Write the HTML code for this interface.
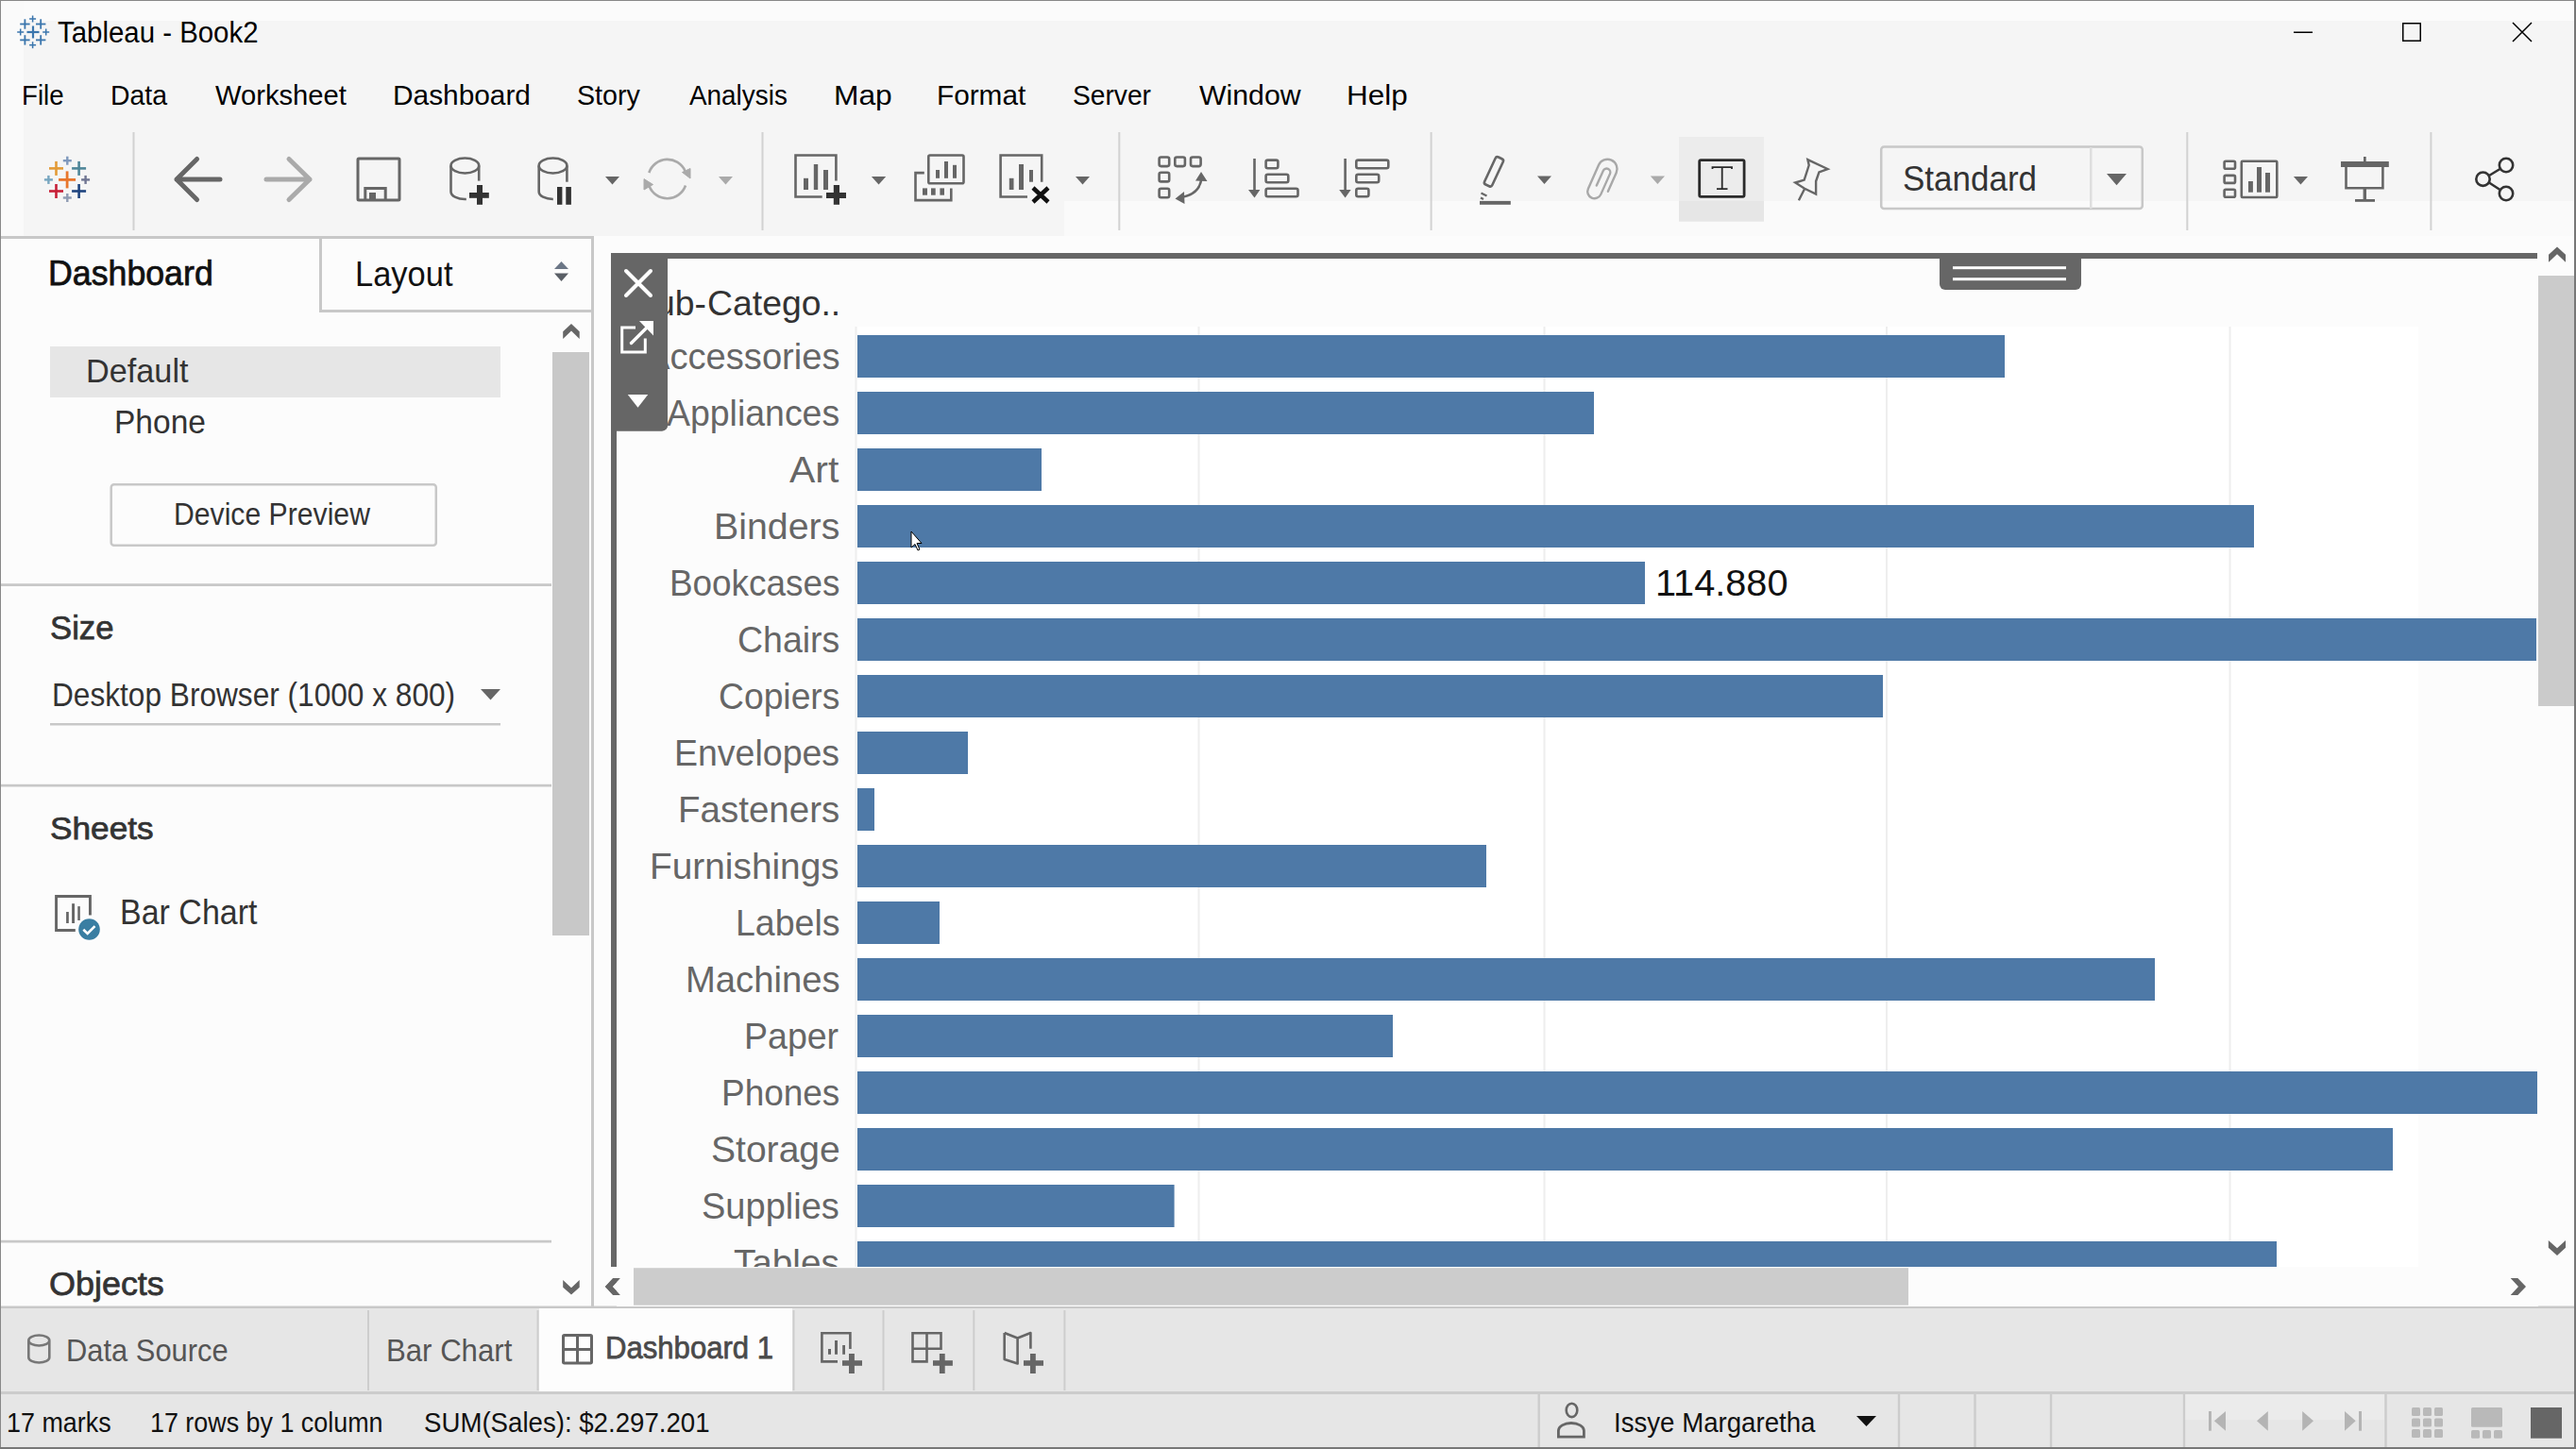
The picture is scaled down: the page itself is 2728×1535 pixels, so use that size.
<!DOCTYPE html>
<html><head><meta charset="utf-8"><style>
html,body{margin:0;padding:0;width:2728px;height:1535px;overflow:hidden;background:#f5f5f5}
.ov{position:absolute;left:0;top:0}
.tx{position:absolute;white-space:nowrap;font-family:"Liberation Sans",sans-serif;transform-origin:0 0}
</style></head><body>
<svg class="ov" width="2728" height="1535" viewBox="0 0 2728 1535"><rect x="0" y="0" width="2728" height="1535" fill="#f5f5f5" />
<rect x="1" y="1" width="2725" height="21" fill="#fbfbfb" />
<rect x="1" y="1" width="24" height="249" fill="#fafafa" />
<rect x="1127" y="213" width="1599" height="37" fill="#fafafa" />
<rect x="28.5" y="32.9" width="13.0" height="2.200000000000003" fill="#3b76ad" />
<rect x="33.9" y="27.5" width="2.200000000000003" height="13.0" fill="#3b76ad" />
<rect x="21.2" y="24.6" width="10.399999999999999" height="1.7999999999999972" fill="#3b76ad" />
<rect x="25.5" y="20.3" width="1.7999999999999972" height="10.399999999999999" fill="#3b76ad" />
<rect x="38.0" y="24.6" width="10.400000000000006" height="1.7999999999999972" fill="#3b76ad" />
<rect x="42.300000000000004" y="20.3" width="1.7999999999999972" height="10.399999999999999" fill="#3b76ad" />
<rect x="21.2" y="41.5" width="10.399999999999999" height="1.7999999999999972" fill="#3b76ad" />
<rect x="25.5" y="37.199999999999996" width="1.7999999999999972" height="10.400000000000006" fill="#3b76ad" />
<rect x="38.0" y="41.5" width="10.400000000000006" height="1.7999999999999972" fill="#3b76ad" />
<rect x="42.300000000000004" y="37.199999999999996" width="1.7999999999999972" height="10.400000000000006" fill="#3b76ad" />
<rect x="31.1" y="19.25" width="7.0" height="1.5" fill="#3b76ad" />
<rect x="33.85" y="16.5" width="1.5" height="7.0" fill="#3b76ad" />
<rect x="31.1" y="46.95" width="7.0" height="1.5" fill="#3b76ad" />
<rect x="33.85" y="44.2" width="1.5" height="7.0" fill="#3b76ad" />
<rect x="18.2" y="33.25" width="7.0" height="1.5" fill="#3b76ad" />
<rect x="20.95" y="30.5" width="1.5" height="7.0" fill="#3b76ad" />
<rect x="45.2" y="33.25" width="7.0" height="1.5" fill="#3b76ad" />
<rect x="47.95" y="30.5" width="1.5" height="7.0" fill="#3b76ad" />
<rect x="2429" y="33.5" width="20" height="1.5" fill="#000" />
<rect x="2544.75" y="24.75" width="18.5" height="18.5" fill="none" stroke="#000" stroke-width="1.5"/>
<path d="M2661 24 L2681 44 M2681 24 L2661 44" stroke="#000" stroke-width="1.5" fill="none" />
<rect x="62.099999999999994" y="189.0" width="18.0" height="2.8000000000000114" fill="#e8762c" />
<rect x="69.69999999999999" y="181.4" width="2.8000000000000114" height="18.0" fill="#e8762c" />
<rect x="52.0" y="177.1" width="15.0" height="2.6000000000000227" fill="#e39b37" />
<rect x="58.2" y="170.9" width="2.5999999999999943" height="15.0" fill="#e39b37" />
<rect x="76.1" y="177.1" width="15.0" height="2.6000000000000227" fill="#4f8799" />
<rect x="82.3" y="170.9" width="2.5999999999999943" height="15.0" fill="#4f8799" />
<rect x="52.0" y="201.2" width="15.0" height="2.6000000000000227" fill="#c72037" />
<rect x="58.2" y="195.0" width="2.5999999999999943" height="15.0" fill="#c72037" />
<rect x="76.1" y="201.2" width="15.0" height="2.6000000000000227" fill="#1f447f" />
<rect x="82.3" y="195.0" width="2.5999999999999943" height="15.0" fill="#1f447f" />
<rect x="66.8" y="169.0" width="9.0" height="2.3999999999999773" fill="#7f98bc" />
<rect x="70.1" y="165.7" width="2.4000000000000057" height="9.0" fill="#7f98bc" />
<rect x="66.8" y="208.3" width="9.0" height="2.3999999999999773" fill="#8e9bb3" />
<rect x="70.1" y="205.0" width="2.4000000000000057" height="9.0" fill="#8e9bb3" />
<rect x="46.9" y="189.20000000000002" width="9.0" height="2.3999999999999773" fill="#77a6c0" />
<rect x="50.199999999999996" y="185.9" width="2.4000000000000057" height="9.0" fill="#77a6c0" />
<rect x="86.1" y="189.20000000000002" width="9.0" height="2.3999999999999773" fill="#6f7592" />
<rect x="89.39999999999999" y="185.9" width="2.4000000000000057" height="9.0" fill="#6f7592" />
<rect x="140.5" y="140" width="2.0" height="104" fill="#d2d2d2" />
<rect x="806.5" y="140" width="2.0" height="104" fill="#d2d2d2" />
<rect x="1184.3" y="140" width="2.0" height="104" fill="#d2d2d2" />
<rect x="1514.6" y="140" width="2.0" height="104" fill="#d2d2d2" />
<rect x="2315.3" y="140" width="2.0" height="104" fill="#d2d2d2" />
<rect x="2573.4" y="140" width="2.0" height="104" fill="#d2d2d2" />
<path d="M187 190 L233 190 M208.6 168.5 L187 190 L208.6 211.5" stroke="#666" stroke-width="5" fill="none" stroke-linecap="round" stroke-linejoin="round"/>
<path d="M282 190 L328 190 M306 168.5 L328 190 L306 211.5" stroke="#aaa" stroke-width="5" fill="none" stroke-linecap="round" stroke-linejoin="round"/>
<rect x="379" y="168" width="44" height="44" rx="1" fill="none" stroke="#666" stroke-width="3"/>
<path d="M386.8 212 L386.8 199.5 L408.2 199.5 L408.2 212" stroke="#666" stroke-width="3" fill="none" />
<rect x="391" y="204" width="7" height="8" fill="#666" />
<path d="M477.5 175.5 A14.849999999999994 8 0 0 1 507.2 175.5 A14.849999999999994 8 0 0 1 477.5 175.5 Z" stroke="#666" stroke-width="2.6" fill="none" />
<path d="M477.5 175.5 L477.5 203 A14.849999999999994 8 0 0 0 493.8 211" stroke="#666" stroke-width="2.6" fill="none" />
<path d="M507.2 175.5 L507.2 191.6" stroke="#666" stroke-width="2.6" fill="none" />
<rect x="497" y="204" width="20.799999999999955" height="5.800000000000011" fill="#333" />
<rect x="505" y="196" width="6" height="20.80000000000001" fill="#333" />
<path d="M570.7 175.5 A14.849999999999966 8 0 0 1 600.4 175.5 A14.849999999999966 8 0 0 1 570.7 175.5 Z" stroke="#666" stroke-width="2.6" fill="none" />
<path d="M570.7 175.5 L570.7 203 A14.849999999999966 8 0 0 0 585.8 211" stroke="#666" stroke-width="2.6" fill="none" />
<path d="M600.4 175.5 L600.4 192.7" stroke="#666" stroke-width="2.6" fill="none" />
<rect x="590" y="198" width="5.399999999999977" height="18.80000000000001" fill="#333" />
<rect x="599.3" y="198" width="5.600000000000023" height="18.80000000000001" fill="#333" />
<path d="M641 187 L656 187 L648.5 195.5 Z" stroke="none" stroke-width="0" fill="#666" />
<path d="M687.3 183 A20.5 20.5 0 0 1 725.5 181 M726 196.5 A20.5 20.5 0 0 1 687.5 197" stroke="#aaa" stroke-width="2.6" fill="none" />
<path d="M722.5 182.5 L731 178.5 L731 189 Z M682 189.6 L682 201 L691.5 195.5 Z" stroke="#aaa" stroke-width="1" fill="#aaa" />
<path d="M761 187 L776 187 L768.5 195.5 Z" stroke="none" stroke-width="0" fill="#aaa" />
<path d="M870.7 208.5 L842.5 208.5 L842.5 164.5 L885.4 164.5 L885.4 191.6" stroke="#666" stroke-width="2.6" fill="none" />
<rect x="851" y="188.8" width="5" height="12.199999999999989" fill="#666" />
<rect x="861.8" y="174" width="4.400000000000091" height="27" fill="#666" />
<rect x="872" y="180" width="5" height="21" fill="#666" />
<rect x="875" y="204" width="21" height="6" fill="#333" />
<rect x="882.8" y="196" width="6.2000000000000455" height="20.80000000000001" fill="#333" />
<path d="M922.9 187 L938.2 187 L930.55 195.5 Z" stroke="none" stroke-width="0" fill="#666" />
<rect x="983.3" y="164.5" width="37.2" height="29.7" rx="1.5" fill="none" stroke="#666" stroke-width="2.6"/>
<rect x="991" y="180" width="4" height="8.800000000000011" fill="#666" />
<rect x="1000" y="171" width="4" height="17.80000000000001" fill="#666" />
<rect x="1009" y="174.8" width="4" height="14.0" fill="#666" />
<path d="M978.8 183.1 L969.5 183.1 L969.5 212.1 L1007.3 212.1 L1007.3 199.4" stroke="#666" stroke-width="2.6" fill="none" />
<rect x="977" y="199.4" width="5" height="7.299999999999983" fill="#666" />
<rect x="986" y="199.4" width="4.7000000000000455" height="7.299999999999983" fill="#666" />
<rect x="995.4" y="199.4" width="4.600000000000023" height="7.299999999999983" fill="#666" />
<path d="M1088 208.5 L1059.6 208.5 L1059.6 164.5 L1103.2 164.5 L1103.2 192.7" stroke="#666" stroke-width="2.6" fill="none" />
<rect x="1068.8" y="188.8" width="4.7000000000000455" height="12.199999999999989" fill="#666" />
<rect x="1079" y="174" width="5" height="27" fill="#666" />
<rect x="1090" y="180" width="4" height="12.699999999999989" fill="#666" />
<path d="M1094 199 L1110 214 M1110 199 L1094 214" stroke="#111" stroke-width="4.5" fill="none" />
<path d="M1139 187 L1154 187 L1146.5 195.5 Z" stroke="none" stroke-width="0" fill="#666" />
<rect x="1227.6" y="166.5" width="10.6" height="9.6" rx="2" fill="none" stroke="#666" stroke-width="2.6"/>
<rect x="1244.3" y="166.5" width="10.6" height="9.6" rx="2" fill="none" stroke="#666" stroke-width="2.6"/>
<rect x="1261.0" y="166.5" width="10.6" height="9.6" rx="2" fill="none" stroke="#666" stroke-width="2.6"/>
<rect x="1227.6" y="182.8" width="10.6" height="9.6" rx="2" fill="none" stroke="#666" stroke-width="2.6"/>
<rect x="1227.6" y="199.70000000000002" width="10.6" height="9.6" rx="2" fill="none" stroke="#666" stroke-width="2.6"/>
<path d="M1250 209 Q1271 206 1272.5 188" stroke="#666" stroke-width="2.6" fill="none" />
<path d="M1272 182 L1278.5 192 L1266 191.5 Z M1244.5 210.5 L1254 203 L1254.5 216 Z" stroke="none" stroke-width="0" fill="#666" />
<rect x="1327.2" y="168" width="2.599999999999909" height="36" fill="#666" />
<path d="M1322 201 L1334.4 201 L1328.5 209.5 Z" stroke="none" stroke-width="0" fill="#666" />
<rect x="1340.6" y="169.60000000000002" width="12.800000000000136" height="8.6" rx="2" fill="none" stroke="#666" stroke-width="2.6"/>
<rect x="1340.6" y="184.70000000000002" width="23.7" height="8.6" rx="2" fill="none" stroke="#666" stroke-width="2.6"/>
<rect x="1340.6" y="199.70000000000002" width="33.90000000000005" height="8.6" rx="2" fill="none" stroke="#666" stroke-width="2.6"/>
<rect x="1423.3" y="168" width="2.6000000000001364" height="36" fill="#666" />
<path d="M1418.2 201 L1430.6 201 L1424.6 209.5 Z" stroke="none" stroke-width="0" fill="#666" />
<rect x="1436.3" y="169.60000000000002" width="33.99999999999996" height="8.6" rx="2" fill="none" stroke="#666" stroke-width="2.6"/>
<rect x="1436.3" y="184.70000000000002" width="23.900000000000045" height="8.6" rx="2" fill="none" stroke="#666" stroke-width="2.6"/>
<rect x="1436.3" y="199.70000000000002" width="13.10000000000009" height="8.6" rx="2" fill="none" stroke="#666" stroke-width="2.6"/>
<rect x="1577" y="166" width="9" height="32" rx="2.5" fill="none" stroke="#666" stroke-width="2.6" transform="rotate(25 1582 183)"/>
<path d="M1568.5 204.5 L1574.5 207.5 M1568 209.5 L1571 211" stroke="#666" stroke-width="2.2" fill="none" />
<rect x="1567" y="212.9" width="32.799999999999955" height="3.9000000000000057" fill="#666" />
<path d="M1628 186.6 L1643 186.6 L1635.5 195 Z" stroke="none" stroke-width="0" fill="#666" />
<path d="M10.2 9.3 L10.2 -12.3 A10.2 10.2 0 0 0 -10.2 -12.3 L-10.2 15.15 A7.35 7.35 0 0 0 4.5 15.15 L4.5 -8.65 A3.95 3.95 0 0 0 -3.4 -8.65 L-3.4 8.5" stroke="#a8a8a8" stroke-width="2.4" fill="none" stroke-linecap="round" transform="translate(1697.35 190.2) rotate(24)"/>
<path d="M1747.8 186.6 L1763 186.6 L1755.4 195 Z" stroke="none" stroke-width="0" fill="#aaa" />
<rect x="1778" y="145" width="90" height="68" fill="#ececec" />
<rect x="1778" y="213" width="90" height="21.69999999999999" fill="#e6e6e6" />
<rect x="1799.7" y="169.6" width="47.4" height="38.7" rx="1.5" fill="none" stroke="#2a2a2a" stroke-width="2.8"/>
<path d="M1813.5 179 L1813.5 177.2 L1834 177.2 L1834 179 M1823.7 177.5 L1823.7 200 M1818 200.2 L1829.5 200.2" stroke="#2a2a2a" stroke-width="1.8" fill="none" />
<path d="M1914.4 169.1 L1935.5 179 L1926.4 182.4 L1923.1 192 L1923.1 205.5 L1911.1 199.75 L1901.2 193.5 L1910.7 190.6 L1915.7 175 Z M1911.1 200 L1904.9 212.2" stroke="#666" stroke-width="2.4" fill="none" stroke-linejoin="miter"/>
<rect x="1992.2" y="155.5" width="276.6" height="65.6" rx="3" fill="none" stroke="#c8c8c8" stroke-width="2.5"/>
<rect x="2213" y="156" width="2.5" height="65" fill="#dedede" />
<path d="M2231 184 L2252 184 L2241.5 196.2 Z" stroke="none" stroke-width="0" fill="#666" />
<rect x="2355.6" y="170.8" width="11.4" height="8" rx="1.5" fill="none" stroke="#666" stroke-width="2.6"/>
<rect x="2355.6" y="185.9" width="11.4" height="8" rx="1.5" fill="none" stroke="#666" stroke-width="2.6"/>
<rect x="2355.6" y="200.8" width="11.4" height="8" rx="1.5" fill="none" stroke="#666" stroke-width="2.6"/>
<rect x="2373.8" y="170.8" width="37.5" height="38.2" rx="1" fill="none" stroke="#666" stroke-width="2.6"/>
<rect x="2381" y="192" width="4.900000000000091" height="11.699999999999989" fill="#666" />
<rect x="2390" y="177" width="5" height="26.69999999999999" fill="#666" />
<rect x="2399" y="183" width="5" height="20.69999999999999" fill="#666" />
<path d="M2428.9 187 L2444 187 L2436.45 195.4 Z" stroke="none" stroke-width="0" fill="#666" />
<rect x="2479" y="171" width="50.80000000000018" height="6" fill="#666" />
<rect x="2503" y="166" width="2.699999999999818" height="5" fill="#666" />
<path d="M2484.5 177 L2484.5 199.3 L2523.4 199.3 L2523.4 177" stroke="#666" stroke-width="2.6" fill="none" />
<rect x="2502.6" y="200" width="3.400000000000091" height="11.400000000000006" fill="#666" />
<rect x="2494" y="211" width="21" height="2.8000000000000114" fill="#666" />
<circle cx="2654" cy="175" r="7.2" fill="none" stroke="#333" stroke-width="2.6"/>
<circle cx="2629.5" cy="189.7" r="7.2" fill="none" stroke="#333" stroke-width="2.6"/>
<circle cx="2654" cy="205" r="7.2" fill="none" stroke="#333" stroke-width="2.6"/>
<path d="M2636 186 L2647.5 179 M2636 193.5 L2647.5 201" stroke="#333" stroke-width="2.6" fill="none" />
<rect x="1" y="253" width="625" height="1131" fill="#fcfcfc" />
<rect x="0" y="250" width="629" height="3" fill="#c8c8c8" />
<rect x="338" y="253" width="3" height="78" fill="#c8c8c8" />
<rect x="338" y="328" width="288" height="3" fill="#c8c8c8" />
<rect x="626" y="250" width="3" height="1134" fill="#c8c8c8" />
<path d="M594.5 277 L602 285 L587 285 Z" stroke="none" stroke-width="0" fill="#6b7686" />
<path d="M587 289.5 L602 289.5 L594.5 298 Z" stroke="none" stroke-width="0" fill="#5a5f66" />
<path d="M596.2 351.3 L605 343 L613.7 351.3 L613.7 359 L605 350.4 L596.2 359 Z" stroke="none" stroke-width="0" fill="#666" />
<path d="M596.2 1356 L605 1364.3 L613.7 1356 L613.7 1363.7 L605 1371.5 L596.2 1363.7 Z" stroke="none" stroke-width="0" fill="#666" />
<rect x="585" y="373" width="39" height="618" fill="#c8c8c8" />
<rect x="53" y="367" width="477" height="54" fill="#e6e6e6" />
<rect x="117.7" y="513.2" width="344.1" height="64.6" rx="3" fill="none" stroke="#c8c8c8" stroke-width="2.5"/>
<rect x="1" y="618.2" width="583" height="2.7999999999999545" fill="#c8c8c8" />
<path d="M509 730 L530 730 L519.5 741.4 Z" stroke="none" stroke-width="0" fill="#666" />
<rect x="53" y="766" width="477" height="2.5" fill="#c8c8c8" />
<rect x="1" y="830.8" width="583" height="2.7000000000000455" fill="#c8c8c8" />
<rect x="1" y="1313.8" width="583" height="2.7000000000000455" fill="#c8c8c8" />
<path d="M79.8 985.45 L59.55 985.45 L59.55 949.45 L95.45 949.45 L95.45 969.6" stroke="#666" stroke-width="2.9" fill="none" />
<rect x="70.1" y="966" width="2.700000000000003" height="12" fill="#666" />
<rect x="76.1" y="957.2" width="2.9000000000000057" height="20.799999999999955" fill="#666" />
<rect x="82.3" y="960.1" width="2.5" height="14.899999999999977" fill="#666" />
<circle cx="94.5" cy="984.5" r="12.6" fill="#fcfcfc"/>
<circle cx="94.5" cy="984.5" r="11.3" fill="#3a7ea2"/>
<path d="M88.3 984.8 L92.7 989 L100.5 981.2" stroke="#fff" stroke-width="2.6" fill="none" />
<rect x="629" y="250" width="2097" height="1134" fill="#fcfcfc" />
<rect x="907" y="346" width="1654" height="996" fill="#ffffff" />
<rect x="905.5" y="346" width="2.0" height="996" fill="#eeeeee" />
<rect x="1268.5" y="346" width="2.0" height="996" fill="#eeeeee" />
<rect x="1634.5" y="346" width="2.0" height="996" fill="#eeeeee" />
<rect x="1997" y="346" width="2" height="996" fill="#eeeeee" />
<rect x="2360.5" y="346" width="2.0" height="996" fill="#eeeeee" />
<rect x="908" y="355" width="1215" height="45" fill="#4e79a7" />
<rect x="908" y="415" width="780" height="45" fill="#4e79a7" />
<rect x="908" y="475" width="195" height="45" fill="#4e79a7" />
<rect x="908" y="535" width="1479" height="45" fill="#4e79a7" />
<rect x="908" y="595" width="834" height="45" fill="#4e79a7" />
<rect x="908" y="655" width="1778" height="45" fill="#4e79a7" />
<rect x="908" y="715" width="1086" height="45" fill="#4e79a7" />
<rect x="908" y="775" width="117" height="45" fill="#4e79a7" />
<rect x="908" y="835" width="18" height="45" fill="#4e79a7" />
<rect x="908" y="895" width="666" height="45" fill="#4e79a7" />
<rect x="908" y="955" width="87" height="45" fill="#4e79a7" />
<rect x="908" y="1015" width="1374" height="45" fill="#4e79a7" />
<rect x="908" y="1075" width="567" height="45" fill="#4e79a7" />
<rect x="908" y="1135" width="1779" height="45" fill="#4e79a7" />
<rect x="908" y="1195" width="1626" height="45" fill="#4e79a7" />
<rect x="908" y="1255" width="335.5999999999999" height="45" fill="#4e79a7" />
<rect x="908" y="1315" width="1503" height="27" fill="#4e79a7" />
<rect x="647" y="268" width="2040" height="6" fill="#666" />
<rect x="647" y="268" width="6" height="1074" fill="#666" />
<path d="M647 268 L707 268 L707 450.6 A6 6 0 0 1 701 456.6 L647 456.6 Z" stroke="none" stroke-width="0" fill="#666" />
<path d="M663 287 L689 313 M689 287 L663 313" stroke="#fff" stroke-width="4" fill="none" stroke-linecap="round"/>
<path d="M673 347 L658.7 347 L658.7 373 L683.3 373 L683.3 358.6" stroke="#fff" stroke-width="3" fill="none" />
<path d="M668.5 363.5 L686 346" stroke="#fff" stroke-width="3.4" fill="none" stroke-linecap="round"/>
<path d="M677 340 L692 340 L692 355.5 Z" stroke="none" stroke-width="0" fill="#fff" />
<path d="M664.8 418 L686.2 418 L675.5 431.7 Z" stroke="none" stroke-width="0" fill="#fff" />
<path d="M2054 274 L2204 274 L2204 301 A6 6 0 0 1 2198 307 L2060 307 A6 6 0 0 1 2054 301 Z" stroke="none" stroke-width="0" fill="#666" />
<rect x="2068" y="282.2" width="120" height="3.0" fill="#fff" />
<rect x="2068" y="294.2" width="120" height="3.0" fill="#fff" />
<rect x="2688" y="292" width="38" height="456" fill="#cbcbcb" />
<path d="M2699 269.8 L2708 261.5 L2717 269.8 L2717 277.7 L2708 269.2 L2699 277.7 Z" stroke="none" stroke-width="0" fill="#666" />
<path d="M2698.8 1313.9 L2708 1322.3 L2717 1313.9 L2717 1321.7 L2708 1330 L2698.8 1321.7 Z" stroke="none" stroke-width="0" fill="#666" />
<rect x="671" y="1343.2" width="1350" height="39.5" fill="#cccccc" />
<path d="M656.9 1354 L649.3 1354 L640.9 1362.9 L649.3 1371.9 L656.9 1371.9 L648.6 1362.9 Z" stroke="none" stroke-width="0" fill="#666" />
<path d="M2658.7 1353.9 L2666.3 1353.9 L2675 1362.9 L2666.3 1371.9 L2658.7 1371.9 L2667 1362.9 Z" stroke="none" stroke-width="0" fill="#666" />
<path d="M965 563 L965 580 L969 576.5 L972 583 L974 582 L971 575.5 L976 575.5 Z" stroke="#000" stroke-width="1" fill="#fff" />
<rect x="0" y="1386" width="2728" height="88" fill="#e6e6e6" />
<rect x="0" y="1383.5" width="2728" height="2.5" fill="#c8c8c8" />
<rect x="571" y="1386" width="268" height="88" fill="#fdfdfd" />
<rect x="389" y="1388" width="2" height="85" fill="#cdcdcd" />
<rect x="568.5" y="1388" width="2.0" height="85" fill="#cdcdcd" />
<rect x="839.5" y="1388" width="2.0" height="85" fill="#cdcdcd" />
<rect x="934.5" y="1388" width="2.0" height="85" fill="#cdcdcd" />
<rect x="1030.3" y="1388" width="2.0" height="85" fill="#cdcdcd" />
<rect x="1126.4" y="1388" width="2.0" height="85" fill="#cdcdcd" />
<path d="M30.3 1420 A11 5.5 0 0 1 52.3 1420 A11 5.5 0 0 1 30.3 1420 Z M30.3 1420 L30.3 1438 A11 5.5 0 0 0 52.3 1438 L52.3 1420" stroke="#777" stroke-width="2.6" fill="none" />
<rect x="596.5" y="1414.5" width="30" height="29.5" rx="1.2" fill="none" stroke="#666" stroke-width="3"/>
<rect x="610" y="1414" width="3" height="31" fill="#666" />
<rect x="596" y="1428" width="31" height="3" fill="#666" />
<path d="M887 1442.4 L870.4 1442.4 L870.4 1412.3 L900.4 1412.3 L900.4 1429" stroke="#666" stroke-width="2.6" fill="none" />
<rect x="877" y="1429" width="3" height="5.7999999999999545" fill="#666" />
<rect x="884" y="1420" width="3" height="14.799999999999955" fill="#666" />
<rect x="892.2" y="1425" width="2.7999999999999545" height="9.799999999999955" fill="#666" />
<rect x="892" y="1441.2" width="21" height="5.599999999999909" fill="#666" />
<rect x="899" y="1434" width="5.899999999999977" height="21" fill="#666" />
<path d="M981.5 1442.4 L966.5 1442.4 L966.5 1412.3 L996.5 1412.3 L996.5 1428.7 L966.5 1428.7 M981.5 1412.3 L981.5 1443.7" stroke="#666" stroke-width="2.6" fill="none" />
<rect x="988" y="1441.2" width="20.899999999999977" height="5.599999999999909" fill="#666" />
<rect x="994.9" y="1434" width="5.800000000000068" height="21" fill="#666" />
<path d="M1063.7 1412 L1063.7 1440 L1077.6 1444.5 L1077.6 1417.5 L1063.7 1412 M1077.6 1417.5 L1091.4 1412 L1091.4 1428.8" stroke="#666" stroke-width="2.6" fill="none" stroke-linejoin="round"/>
<rect x="1084" y="1441.2" width="21" height="5.599999999999909" fill="#666" />
<rect x="1091" y="1434" width="5.7999999999999545" height="21" fill="#666" />
<rect x="0" y="1477" width="2728" height="56" fill="#e6e6e6" />
<rect x="0" y="1474" width="2728" height="3" fill="#cccccc" />
<rect x="1628.5" y="1477" width="2.400000000000091" height="56" fill="#cccccc" />
<rect x="2009.8" y="1477" width="2.400000000000091" height="56" fill="#cccccc" />
<rect x="2090.3" y="1477" width="2.399999999999636" height="56" fill="#cccccc" />
<rect x="2170.8" y="1477" width="2.399999999999636" height="56" fill="#cccccc" />
<rect x="2311.8" y="1477" width="2.399999999999636" height="56" fill="#cccccc" />
<rect x="2525.3" y="1477" width="2.399999999999636" height="56" fill="#cccccc" />
<ellipse cx="1664.5" cy="1493.9" rx="5.8" ry="7.2" fill="none" stroke="#666" stroke-width="2.6"/>
<path d="M1650.4 1522.1 L1650.4 1515.5 A13.5 8 0 0 1 1677.4 1515.5 L1677.4 1522.1 Z" stroke="#666" stroke-width="2.8" fill="none" />
<path d="M1966 1500 L1987 1500 L1976.5 1511 Z" stroke="none" stroke-width="0" fill="#111" />
<rect x="2314.5" y="1477" width="210.5" height="27" fill="#ebebeb" />
<rect x="2339" y="1495" width="2.900000000000091" height="20.700000000000045" fill="#b4b4b4" />
<path d="M2357 1495 L2357 1515.7 L2344.9 1505.35 Z" stroke="none" stroke-width="0" fill="#b4b4b4" />
<path d="M2401.8 1495 L2401.8 1515.7 L2390 1505.35 Z" stroke="none" stroke-width="0" fill="#b4b4b4" />
<path d="M2438.2 1495 L2438.2 1515.7 L2450 1505.35 Z" stroke="none" stroke-width="0" fill="#b4b4b4" />
<path d="M2483 1495 L2483 1515.7 L2494.7 1505.35 Z" stroke="none" stroke-width="0" fill="#b4b4b4" />
<rect x="2498" y="1495" width="3" height="20.700000000000045" fill="#b4b4b4" />
<rect x="2554" y="1491.0" width="9" height="9" rx="1.5" fill="#b9b9b9"/>
<rect x="2554" y="1502.5" width="9" height="9" rx="1.5" fill="#b9b9b9"/>
<rect x="2554" y="1514.0" width="9" height="9" rx="1.5" fill="#b9b9b9"/>
<rect x="2566" y="1491.0" width="9" height="9" rx="1.5" fill="#b9b9b9"/>
<rect x="2566" y="1502.5" width="9" height="9" rx="1.5" fill="#b9b9b9"/>
<rect x="2566" y="1514.0" width="9" height="9" rx="1.5" fill="#b9b9b9"/>
<rect x="2578" y="1491.0" width="9" height="9" rx="1.5" fill="#b9b9b9"/>
<rect x="2578" y="1502.5" width="9" height="9" rx="1.5" fill="#b9b9b9"/>
<rect x="2578" y="1514.0" width="9" height="9" rx="1.5" fill="#b9b9b9"/>
<rect x="2617" y="1491" width="33" height="20.8" rx="1.5" fill="#b9b9b9"/>
<rect x="2617" y="1515" width="9" height="8.7" rx="1.5" fill="#b9b9b9"/>
<rect x="2629" y="1515" width="9" height="8.7" rx="1.5" fill="#b9b9b9"/>
<rect x="2641" y="1515" width="9" height="8.7" rx="1.5" fill="#b9b9b9"/>
<rect x="2680" y="1491" width="33" height="32.700000000000045" fill="#666" />
<rect x="0" y="0" width="2728" height="1" fill="#888" />
<rect x="0" y="0" width="1" height="1535" fill="#888" />
<rect x="2726" y="0" width="2" height="1535" fill="#777" />
<rect x="0" y="1533" width="2728" height="2" fill="#777" /></svg>
<div class="tx" style="left:60.54px;top:20.42px;font-size:30.81px;line-height:30.81px;font-weight:normal;color:#000;transform:scaleX(0.9549);">Tableau - Book2</div><div class="tx" style="left:23.14px;top:85.63px;font-size:30.09px;line-height:30.09px;font-weight:normal;color:#000;transform:scaleX(0.9196);">File</div><div class="tx" style="left:116.58px;top:85.63px;font-size:30.09px;line-height:30.09px;font-weight:normal;color:#000;transform:scaleX(0.9447);">Data</div><div class="tx" style="left:228.00px;top:85.63px;font-size:30.09px;line-height:30.09px;font-weight:normal;color:#000;transform:scaleX(0.9696);">Worksheet</div><div class="tx" style="left:415.67px;top:85.63px;font-size:30.09px;line-height:30.09px;font-weight:normal;color:#000;transform:scaleX(0.9920);">Dashboard</div><div class="tx" style="left:611.10px;top:85.63px;font-size:30.09px;line-height:30.09px;font-weight:normal;color:#000;transform:scaleX(0.9526);">Story</div><div class="tx" style="left:730.00px;top:85.63px;font-size:30.09px;line-height:30.09px;font-weight:normal;color:#000;transform:scaleX(0.9271);">Analysis</div><div class="tx" style="left:882.52px;top:85.63px;font-size:30.09px;line-height:30.09px;font-weight:normal;color:#000;transform:scaleX(1.0553);">Map</div><div class="tx" style="left:991.68px;top:85.63px;font-size:30.09px;line-height:30.09px;font-weight:normal;color:#000;transform:scaleX(0.9888);">Format</div><div class="tx" style="left:1136.12px;top:85.63px;font-size:30.09px;line-height:30.09px;font-weight:normal;color:#000;transform:scaleX(0.9368);">Server</div><div class="tx" style="left:1270.00px;top:85.63px;font-size:30.09px;line-height:30.09px;font-weight:normal;color:#000;transform:scaleX(1.0058);">Window</div><div class="tx" style="left:1425.54px;top:85.63px;font-size:30.09px;line-height:30.09px;font-weight:normal;color:#000;transform:scaleX(1.0462);">Help</div><div class="tx" style="left:2014.91px;top:170.51px;font-size:37.79px;line-height:37.79px;font-weight:normal;color:#333;transform:scaleX(0.9262);">Standard</div><div class="tx" style="left:51.21px;top:271.74px;font-size:36.34px;line-height:36.34px;font-weight:normal;color:#111;transform:scaleX(0.9833);-webkit-text-stroke:0.75px currentColor;">Dashboard</div><div class="tx" style="left:376.30px;top:272.74px;font-size:36.34px;line-height:36.34px;font-weight:normal;color:#111;transform:scaleX(0.9494);">Layout</div><div class="tx" style="left:91.32px;top:375.83px;font-size:35.76px;line-height:35.76px;font-weight:normal;color:#333;transform:scaleX(0.9582);">Default</div><div class="tx" style="left:121.38px;top:429.97px;font-size:34.88px;line-height:34.88px;font-weight:normal;color:#333;transform:scaleX(0.9614);">Phone</div><div class="tx" style="left:183.64px;top:528.20px;font-size:33.43px;line-height:33.43px;font-weight:normal;color:#333;transform:scaleX(0.9028);">Device Preview</div><div class="tx" style="left:52.92px;top:647.57px;font-size:34.88px;line-height:34.88px;font-weight:normal;color:#333;transform:scaleX(0.9946);-webkit-text-stroke:0.75px currentColor;">Size</div><div class="tx" style="left:54.53px;top:719.09px;font-size:34.16px;line-height:34.16px;font-weight:normal;color:#333;transform:scaleX(0.9258);">Desktop Browser (1000 x 800)</div><div class="tx" style="left:52.90px;top:861.82px;font-size:32.70px;line-height:32.70px;font-weight:normal;color:#333;transform:scaleX(1.0775);-webkit-text-stroke:0.75px currentColor;">Sheets</div><div class="tx" style="left:127.34px;top:948.74px;font-size:36.34px;line-height:36.34px;font-weight:normal;color:#333;transform:scaleX(0.9360);">Bar Chart</div><div class="tx" style="left:52.32px;top:1342.83px;font-size:35.76px;line-height:35.76px;font-weight:normal;color:#333;transform:scaleX(1.0049);-webkit-text-stroke:0.75px currentColor;">Objects</div><div class="tx" style="left:1752.52px;top:599.26px;font-size:38.08px;line-height:38.08px;font-weight:normal;color:#111;transform:scaleX(1.0418);">114.880</div><div class="tx" style="left:69.59px;top:1414.20px;font-size:33.43px;line-height:33.43px;font-weight:normal;color:#555;transform:scaleX(0.9238);">Data Source</div><div class="tx" style="left:408.57px;top:1414.20px;font-size:33.43px;line-height:33.43px;font-weight:normal;color:#555;transform:scaleX(0.9320);">Bar Chart</div><div class="tx" style="left:640.57px;top:1411.45px;font-size:33.14px;line-height:33.14px;font-weight:normal;color:#4a4a4a;transform:scaleX(0.9390);-webkit-text-stroke:0.75px currentColor;">Dashboard 1</div><div class="tx" style="left:7.22px;top:1492.77px;font-size:29.22px;line-height:29.22px;font-weight:normal;color:#111;transform:scaleX(0.9208);">17 marks</div><div class="tx" style="left:159.02px;top:1492.77px;font-size:29.22px;line-height:29.22px;font-weight:normal;color:#111;transform:scaleX(0.9200);">17 rows by 1 column</div><div class="tx" style="left:448.64px;top:1492.77px;font-size:29.22px;line-height:29.22px;font-weight:normal;color:#111;transform:scaleX(0.9455);">SUM(Sales): $2.297.201</div><div class="tx" style="left:1709.24px;top:1493.02px;font-size:28.92px;line-height:28.92px;font-weight:normal;color:#111;transform:scaleX(0.9558);">Issye Margaretha</div>
<div class="tx" style="left:683.63px;top:359.46px;font-size:38.08px;line-height:38.08px;font-weight:normal;color:#666;transform:scaleX(1.0014);">Accessories</div><div class="tx" style="left:706.00px;top:419.46px;font-size:38.08px;line-height:38.08px;font-weight:normal;color:#666;transform:scaleX(0.9832);">Appliances</div><div class="tx" style="left:835.60px;top:479.46px;font-size:38.08px;line-height:38.08px;font-weight:normal;color:#666;transform:scaleX(1.0740);">Art</div><div class="tx" style="left:755.93px;top:539.46px;font-size:38.08px;line-height:38.08px;font-weight:normal;color:#666;transform:scaleX(1.0324);">Binders</div><div class="tx" style="left:708.72px;top:599.46px;font-size:38.08px;line-height:38.08px;font-weight:normal;color:#666;transform:scaleX(0.9686);">Bookcases</div><div class="tx" style="left:780.84px;top:659.46px;font-size:38.08px;line-height:38.08px;font-weight:normal;color:#666;transform:scaleX(0.9844);">Chairs</div><div class="tx" style="left:760.75px;top:719.46px;font-size:38.08px;line-height:38.08px;font-weight:normal;color:#666;transform:scaleX(0.9786);">Copiers</div><div class="tx" style="left:714.07px;top:779.46px;font-size:38.08px;line-height:38.08px;font-weight:normal;color:#666;transform:scaleX(0.9846);">Envelopes</div><div class="tx" style="left:717.99px;top:839.46px;font-size:38.08px;line-height:38.08px;font-weight:normal;color:#666;transform:scaleX(1.0112);">Fasteners</div><div class="tx" style="left:688.47px;top:899.46px;font-size:38.08px;line-height:38.08px;font-weight:normal;color:#666;transform:scaleX(1.0198);">Furnishings</div><div class="tx" style="left:778.57px;top:959.46px;font-size:38.08px;line-height:38.08px;font-weight:normal;color:#666;transform:scaleX(0.9856);">Labels</div><div class="tx" style="left:725.61px;top:1019.46px;font-size:38.08px;line-height:38.08px;font-weight:normal;color:#666;transform:scaleX(1.0037);">Machines</div><div class="tx" style="left:788.07px;top:1079.46px;font-size:38.08px;line-height:38.08px;font-weight:normal;color:#666;transform:scaleX(0.9852);">Paper</div><div class="tx" style="left:763.81px;top:1139.46px;font-size:38.08px;line-height:38.08px;font-weight:normal;color:#666;transform:scaleX(0.9705);">Phones</div><div class="tx" style="left:752.78px;top:1199.46px;font-size:38.08px;line-height:38.08px;font-weight:normal;color:#666;transform:scaleX(1.0257);">Storage</div><div class="tx" style="left:743.31px;top:1259.46px;font-size:38.08px;line-height:38.08px;font-weight:normal;color:#666;transform:scaleX(0.9986);">Supplies</div><div class="tx" style="left:777.40px;top:1319.46px;font-size:38.08px;line-height:38.08px;font-weight:normal;color:#666;transform:scaleX(1.0158);">Tables</div><div class="tx" style="left:749.15px;top:302.80px;font-size:37.21px;line-height:37.21px;font-weight:normal;color:#333;transform:scaleX(1.0040);">Catego..</div><div class="tx" style="left:669.44px;top:302.80px;font-size:37.21px;line-height:37.21px;font-weight:normal;color:#333;transform:scaleX(1.0040);">Sub-</div>
<svg class="ov" width="2728" height="1535" viewBox="0 0 2728 1535"><path d="M647 268 L707 268 L707 450.6 A6 6 0 0 1 701 456.6 L647 456.6 Z" fill="#666"/>
<path d="M663 287 L689 313 M689 287 L663 313" stroke="#fff" stroke-width="4" stroke-linecap="round" fill="none"/>
<path d="M673 347 L658.7 347 L658.7 373 L683.3 373 L683.3 358.6" stroke="#fff" stroke-width="3" fill="none"/>
<path d="M668.5 363.5 L686 346" stroke="#fff" stroke-width="3.4" stroke-linecap="round" fill="none"/>
<path d="M677 340 L692 340 L692 355.5 Z" fill="#fff"/>
<path d="M664.8 418 L686.2 418 L675.5 431.7 Z" fill="#fff"/>
<rect x="653" y="1342" width="2035" height="42" fill="#fcfcfc"/>
<rect x="671" y="1343.2" width="1350" height="39.5" fill="#cccccc"/>
<path d="M656.9 1354 L649.3 1354 L640.9 1362.9 L649.3 1371.9 L656.9 1371.9 L648.6 1362.9 Z" fill="#666"/>
<path d="M2658.7 1353.9 L2666.3 1353.9 L2675 1362.9 L2666.3 1371.9 L2658.7 1371.9 L2667 1362.9 Z" fill="#666"/></svg>
</body></html>
